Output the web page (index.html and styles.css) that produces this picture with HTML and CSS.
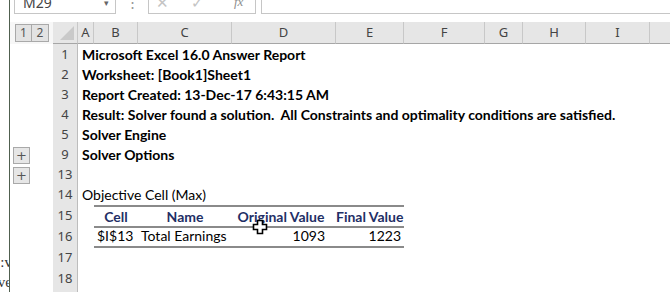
FILE: index.html
```html
<!DOCTYPE html>
<html lang="en">
<head>
    <meta charset="UTF-8">
    <title>Answer Report</title>
    <link rel="stylesheet" href="styles.css">
</head>
<body>
    <div class="window">
        <!-- sliver of the window behind -->
        <div class="stray">
            <span class="s1">:v</span>
            <span class="s2">ve</span>
        </div>

        <div class="sheet">
            <!-- formula bar, cut off at the top -->
            <div class="fbar">
                <div class="namebox"><span>M29</span><span class="drop">&#9662;</span></div>
                <div class="grip">&#8942;</div>
                <div class="fbtns"><span>&#10005;</span><span>&#10003;</span><span class="fx">fx</span></div>
                <div class="finput"></div>
            </div>

            <div class="row colhead">
                <div class="outline levels"><span class="lvl">1</span><span class="lvl">2</span></div>
                <div class="corner"><span class="tri"></span></div>
                <div class="ch">A</div>
                <div class="ch">B</div>
                <div class="ch">C</div>
                <div class="ch">D</div>
                <div class="ch">E</div>
                <div class="ch">F</div>
                <div class="ch">G</div>
                <div class="ch">H</div>
                <div class="ch">I</div>
                <div class="ch last"></div>
            </div>

            <div class="row"><div class="outline"></div><div class="rh">1</div><div class="text bold">Microsoft Excel 16.0 Answer Report</div></div>
            <div class="row"><div class="outline"></div><div class="rh">2</div><div class="text bold">Worksheet: [Book1]Sheet1</div></div>
            <div class="row"><div class="outline"></div><div class="rh">3</div><div class="text bold">Report Created: 13-Dec-17 6:43:15 AM</div></div>
            <div class="row"><div class="outline"></div><div class="rh">4</div><div class="text bold">Result: Solver found a solution.  All Constraints and optimality conditions are satisfied.</div></div>
            <div class="row"><div class="outline"></div><div class="rh">5</div><div class="text bold">Solver Engine</div></div>
            <div class="row"><div class="outline"><span class="plus">+</span></div><div class="rh">9</div><div class="text bold">Solver Options</div></div>
            <div class="row"><div class="outline"><span class="plus">+</span></div><div class="rh">13</div><div class="text"></div></div>
            <div class="row tall"><div class="outline"></div><div class="rh">14</div><div class="text">Objective Cell (Max)</div></div>

            <div class="row tall">
                <div class="outline"></div><div class="rh">15</div>
                <div class="c"></div>
                <div class="c th">Cell</div>
                <div class="c th">Name</div>
                <div class="c th shift">Original Value</div>
                <div class="c th shift">Final Value</div>
            </div>
            <div class="row tall">
                <div class="outline"></div><div class="rh">16</div>
                <div class="c"></div>
                <div class="c td">$I$13</div>
                <div class="c td">Total Earnings</div>
                <div class="c td num pad">1093</div>
                <div class="c td num">1223</div>
            </div>
            <div class="row tall"><div class="outline"></div><div class="rh">17</div><div class="text"></div></div>
            <div class="row"><div class="outline"></div><div class="rh">18</div><div class="text"></div></div>
            <div class="row"><div class="outline"></div><div class="rh"></div><div class="text"></div></div>

            <!-- excel cell cursor -->
            <svg class="cursor" width="16" height="16" viewBox="0 0 16 16">
                <path d="M5.5 1.5h5v4h4v5h-4v4h-5v-4h-4v-5h4z" fill="#fff" stroke="#000" stroke-width="1.6"/>
            </svg>
        </div>
    </div>
</body>
</html>
```

FILE: styles.css
```css
* {
    margin: 0;
    padding: 0;
    box-sizing: border-box;
}
body {
    width: 670px;
    height: 292px;
    overflow: hidden;
    background: #fff;
    font-family: 'Lato', sans-serif;
}
.window {
    display: flex;
    height: 292px;
}
.stray {
    width: 10px;
    flex: 0 0 10px;
    border-right: 1px solid #50604f;
    display: flex;
    flex-direction: column;
    justify-content: flex-end;
    align-items: flex-end;
    overflow: hidden;
    font-family: 'Liberation Serif', serif;
    font-size: 15px;
    color: #333;
}
.stray span {
    line-height: 20px;
    margin-right: -3px;
    white-space: nowrap;
}
.sheet {
    position: relative;
    flex: 1;
    overflow: hidden;
}

/* formula bar */
.fbar {
    height: 22px;
    display: flex;
    align-items: flex-end;
    padding: 0 0 8px 4px;
    background: #fff;
    font-family: 'Noto Sans', sans-serif;
    color: #444;
}
.namebox {
    width: 102px;
    height: 24px;
    border: 1px solid #c6c6c6;
    background: #fff;
    display: flex;
    justify-content: space-between;
    align-items: center;
    padding: 0 6px 0 8px;
    font-size: 14px;
}
.drop {
    font-size: 9px;
    color: #666;
}
.grip {
    width: 32px;
    height: 24px;
    text-align: center;
    font-size: 15px;
    line-height: 22px;
    color: #9a9a9a;
}
.fbtns {
    width: 108px;
    height: 24px;
    border: 1px solid #c6c6c6;
    background: #fff;
    display: flex;
    align-items: center;
    padding-left: 7px;
    gap: 22px;
    font-size: 15px;
    color: #c4c4c4;
}
.fbtns .fx {
    font-family: 'Liberation Serif', serif;
    font-style: italic;
    font-size: 13px;
    margin-left: 8px;
    color: #8e8e8e;
}
.finput {
    flex: 1;
    height: 24px;
    margin-left: 5px;
    border: 1px solid #c6c6c6;
    border-right: none;
    background: #fff;
}

/* grid rows */
.row {
    display: grid;
    grid-template-columns: 43px 25px 16px 44px 94px 104px 68px 81px 38px 63px 64px 1fr;
    height: 20px;
}
.row.tall {
    height: 21px;
}
.outline {
    display: flex;
    align-items: center;
    padding-left: 3px;
}
.plus {
    width: 17px;
    height: 17px;
    border: 1px solid #a9a9a9;
    background: #e6e6e6;
    color: #555;
    font-family: 'DejaVu Sans', sans-serif;
    font-size: 13px;
    line-height: 15px;
    text-align: center;
}
.rh {
    background: #e6e6e6;
    border-right: 1px solid #bdbdbd;
    border-bottom: 1px solid #d2d2d2;
    font-family: 'Noto Sans', sans-serif;
    font-size: 13px;
    color: #444;
    text-align: center;
    line-height: 21px;
}

/* column header */
.colhead {
    height: 22px;
    background: #f7f7f7;
}
.levels {
    padding-left: 5px;
    padding-top: 2px;
    align-items: flex-start;
}
.lvl {
    width: 17px;
    height: 18px;
    border: 1px solid #a9a9a9;
    background: #e3e3e3;
    font-family: 'Noto Sans', sans-serif;
    font-size: 12px;
    line-height: 16px;
    color: #555;
    text-align: center;
}
.lvl + .lvl {
    border-left: none;
}
.corner {
    background: #e6e6e6;
    border-bottom: 1px solid #a6a6a6;
    border-right: 1px solid #c8c8c8;
    position: relative;
}
.tri {
    position: absolute;
    right: 3px;
    bottom: 3px;
    width: 0;
    height: 0;
    border-left: 14px solid transparent;
    border-bottom: 14px solid #c9c9c9;
}
.ch {
    background: #e6e6e6;
    border-right: 1px solid #c8c8c8;
    border-bottom: 1px solid #a6a6a6;
    font-family: 'Noto Sans', sans-serif;
    font-size: 13px;
    color: #444;
    text-align: center;
    line-height: 21px;
}
.ch.last {
    border-right: none;
}

/* cells */
.text {
    grid-column: 3 / -1;
    padding-left: 4px;
    font-size: 14px;
    color: #000;
    line-height: 21px;
    white-space: pre;
}
.bold {
    font-weight: bold;
}
.c {
    font-size: 14px;
    line-height: 19px;
    white-space: nowrap;
}
.th {
    border-top: 2px solid #8a8a8a;
    border-bottom: 2px solid #8a8a8a;
    color: #1f2f66;
    font-weight: bold;
    text-align: center;
}
.th.shift {
    padding-right: 6px;
}
.td {
    border-bottom: 2px solid #8a8a8a;
    padding: 0 3px;
    color: #000;
}
.num {
    text-align: right;
}
.num.pad {
    padding-right: 11px;
}
.cursor {
    position: absolute;
    left: 242px;
    top: 219px;
}
```
